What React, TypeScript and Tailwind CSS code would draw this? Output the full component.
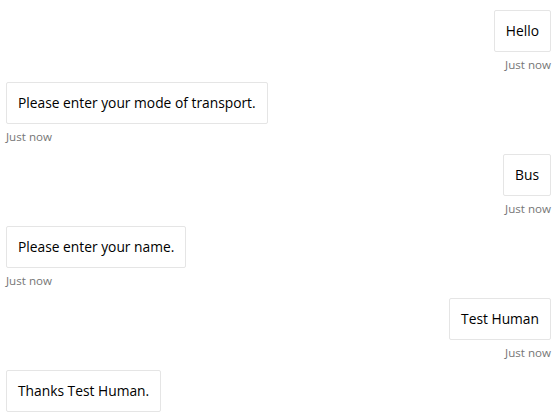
import React from 'react';

interface Message {
  id: number;
  text: string;
  fromUser: boolean;
  time?: string;
}

const messages: Message[] = [
  { id: 1, text: 'Hello', fromUser: true, time: 'Just now' },
  { id: 2, text: 'Please enter your mode of transport.', fromUser: false, time: 'Just now' },
  { id: 3, text: 'Bus', fromUser: true, time: 'Just now' },
  { id: 4, text: 'Please enter your name.', fromUser: false, time: 'Just now' },
  { id: 5, text: 'Test Human', fromUser: true, time: 'Just now' },
  { id: 6, text: 'Thanks Test Human.', fromUser: false },
];

const ChatBubble: React.FC<{ message: Message }> = ({ message }) => (
  <div className={message.fromUser ? 'flex flex-col items-end' : 'flex flex-col items-start'}>
    <div className="bg-white border border-[#e5e5e5] rounded-[2px] px-[11px] py-[10px] text-[13.8px] leading-[20px] text-black">
      {message.text}
    </div>
    {message.time && (
      <div className="pt-[5px] pb-[9px] text-[11.6px] leading-[16px] text-[#767676]">{message.time}</div>
    )}
  </div>
);

const App: React.FC = () => {
  return (
    <div className="h-screen overflow-hidden bg-white pl-[6px] pr-[7px] pt-[10px] font-['Open_Sans',sans-serif]">
      {messages.map((m) => (
        <ChatBubble key={m.id} message={m}/>
      ))}
    </div>
  );
};

export default App;
